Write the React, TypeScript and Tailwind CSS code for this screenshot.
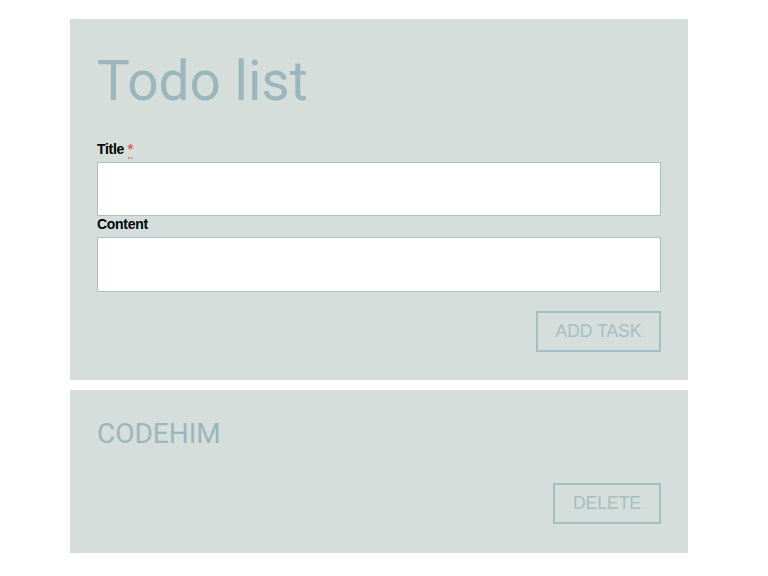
import React from "react";

export default function App() {
  return (
    <div className="min-h-[576px] w-[768px] bg-white pt-[19px] font-['Liberation_Sans',Arial,sans-serif]">
      <div className="ml-[70px] w-[618px] flex flex-col gap-[10px]">
        <div className="bg-[#d5deda] px-[27px] pt-[30px] pb-[28px] flex flex-col">
          <h1 className="font-['Roboto',sans-serif] text-[55px] leading-[64px] font-normal text-[#9cb6bd] m-0">Todo list</h1>
          <div className="mt-[28px] text-[14px] leading-[16px] font-bold text-black tracking-[-0.3px]">
            Title{" "}
            <abbr title="required" className="text-[#e05a5a] no-underline border-b-2 border-dotted border-[#e88a8a]">*</abbr>
          </div>
          <input className="mt-[5px] h-[54px] w-full bg-white border border-[#a9c1c7] outline-none" />
          <div className="mt-0 text-[14px] leading-[16px] font-bold text-black tracking-[-0.3px]">Content</div>
          <input className="mt-[5px] h-[55px] w-full bg-white border border-[#a9c1c7] outline-none" />
          <div className="flex justify-end mt-[19px]">
            <button className="h-[41px] w-[125px] border-2 border-[#a4bec4] text-[#a4bec4] text-[17.5px] bg-transparent">ADD TASK</button>
          </div>
        </div>
        <div className="bg-[#d5deda] px-[27px] pt-[28px] pb-[29px] flex flex-col">
          <div className="font-['Roboto',sans-serif] text-[28px] leading-[32px] text-[#9cb6bd]">CODEHIM</div>
          <div className="flex justify-end mt-[33px]">
            <button className="h-[41px] w-[108px] border-2 border-[#a4bec4] text-[#a4bec4] text-[17.5px] bg-transparent">DELETE</button>
          </div>
        </div>
      </div>
    </div>
  );
}
